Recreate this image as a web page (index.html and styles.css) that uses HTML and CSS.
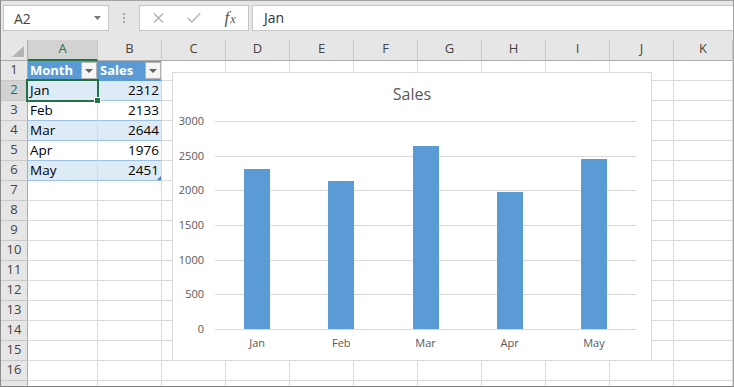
FILE: index.html
```html
<!DOCTYPE html>
<html lang="en">
<head>
    <meta charset="UTF-8">
    <meta name="viewport" content="width=device-width, initial-scale=1.0">
    <title>Sales - Excel</title>
    <link rel="stylesheet" href="styles.css">
</head>
<body>
<div class="window">
    <!-- Formula bar -->
    <div class="formula-bar">
        <div class="name-box">
            <span>A2</span>
            <svg class="caret" width="7" height="4" viewBox="0 0 7 4"><path d="M0 0h7L3.5 4z"/></svg>
        </div>
        <div class="grip"><i></i><i></i><i></i></div>
        <div class="fx-buttons">
            <span class="fx-btn">
                <svg width="11" height="10" viewBox="0 0 11 10"><path d="M1 0.5l9 9M10 0.5l-9 9"/></svg>
            </span>
            <span class="fx-btn">
                <svg width="14" height="10" viewBox="0 0 14 10"><path d="M0.8 5l4 4L13.2 0.6"/></svg>
            </span>
            <span class="fx-btn"><span class="fx">f<sub>x</sub></span></span>
        </div>
        <div class="formula-input">Jan</div>
    </div>

    <!-- Sheet -->
    <div class="sheet">
        <div class="row head">
            <div class="corner"><svg width="12" height="11" viewBox="0 0 12 11"><path d="M12 0v11H0z"/></svg></div>
            <div class="sel">A</div><div>B</div><div>C</div><div>D</div><div>E</div><div>F</div><div>G</div><div>H</div><div>I</div><div>J</div><div>K</div>
        </div>
        <div class="row">
            <div class="rh">1</div>
            <div class="th th-first"><span>Month</span><b class="filter"></b></div>
            <div class="th"><span>Sales</span><b class="filter"></b></div>
            <div></div><div></div><div></div><div></div><div></div><div></div><div></div><div></div><div></div>
        </div>
        <div class="row">
            <div class="rh sel">2</div>
            <div class="band cur">Jan</div><div class="band num">2312</div>
            <div></div><div></div><div></div><div></div><div></div><div></div><div></div><div></div><div></div>
        </div>
        <div class="row">
            <div class="rh">3</div>
            <div class="plain">Feb</div><div class="plain num">2133</div>
            <div></div><div></div><div></div><div></div><div></div><div></div><div></div><div></div><div></div>
        </div>
        <div class="row">
            <div class="rh">4</div>
            <div class="band">Mar</div><div class="band num">2644</div>
            <div></div><div></div><div></div><div></div><div></div><div></div><div></div><div></div><div></div>
        </div>
        <div class="row">
            <div class="rh">5</div>
            <div class="plain">Apr</div><div class="plain num">1976</div>
            <div></div><div></div><div></div><div></div><div></div><div></div><div></div><div></div><div></div>
        </div>
        <div class="row">
            <div class="rh">6</div>
            <div class="band">May</div><div class="band num table-end">2451</div>
            <div></div><div></div><div></div><div></div><div></div><div></div><div></div><div></div><div></div>
        </div>
        <div class="row"><div class="rh">7</div><div></div><div></div><div></div><div></div><div></div><div></div><div></div><div></div><div></div><div></div><div></div></div>
        <div class="row"><div class="rh">8</div><div></div><div></div><div></div><div></div><div></div><div></div><div></div><div></div><div></div><div></div><div></div></div>
        <div class="row"><div class="rh">9</div><div></div><div></div><div></div><div></div><div></div><div></div><div></div><div></div><div></div><div></div><div></div></div>
        <div class="row"><div class="rh">10</div><div></div><div></div><div></div><div></div><div></div><div></div><div></div><div></div><div></div><div></div><div></div></div>
        <div class="row"><div class="rh">11</div><div></div><div></div><div></div><div></div><div></div><div></div><div></div><div></div><div></div><div></div><div></div></div>
        <div class="row"><div class="rh">12</div><div></div><div></div><div></div><div></div><div></div><div></div><div></div><div></div><div></div><div></div><div></div></div>
        <div class="row"><div class="rh">13</div><div></div><div></div><div></div><div></div><div></div><div></div><div></div><div></div><div></div><div></div><div></div></div>
        <div class="row"><div class="rh">14</div><div></div><div></div><div></div><div></div><div></div><div></div><div></div><div></div><div></div><div></div><div></div></div>
        <div class="row"><div class="rh">15</div><div></div><div></div><div></div><div></div><div></div><div></div><div></div><div></div><div></div><div></div><div></div></div>
        <div class="row"><div class="rh">16</div><div></div><div></div><div></div><div></div><div></div><div></div><div></div><div></div><div></div><div></div><div></div></div>
        <div class="row"><div class="rh"></div><div></div><div></div><div></div><div></div><div></div><div></div><div></div><div></div><div></div><div></div><div></div></div>

        <!-- Chart floating over the grid -->
        <div class="chart">
            <div class="chart-title">Sales</div>
            <div class="chart-body">
                <div class="y-axis">
                    <span>3000</span><span>2500</span><span>2000</span><span>1500</span><span>1000</span><span>500</span><span>0</span>
                </div>
                <div class="plot-area">
                    <div class="plot">
                        <div class="gridlines"><i></i><i></i><i></i><i></i><i></i><i></i></div>
                        <div class="bars">
                            <div class="cat"><div class="bar" style="height: 77.07%"></div></div>
                            <div class="cat"><div class="bar" style="height: 71.1%"></div></div>
                            <div class="cat"><div class="bar" style="height: 88.13%"></div></div>
                            <div class="cat"><div class="bar" style="height: 65.87%"></div></div>
                            <div class="cat"><div class="bar" style="height: 81.7%"></div></div>
                        </div>
                    </div>
                    <div class="x-axis">
                        <span>Jan</span><span>Feb</span><span>Mar</span><span>Apr</span><span>May</span>
                    </div>
                </div>
            </div>
        </div>
    </div>
</div>
</body>
</html>
```

FILE: styles.css
```css
body {
    margin: 0;
    font-family: "Open Sans", sans-serif;
    background-color: #fff;
}
.window {
    width: 734px;
    height: 387px;
    box-sizing: border-box;
    border: 1px solid #a3a3a3;
    border-left-color: #8c8c8c;
    border-bottom-color: #808080;
    background-color: #e6e6e6;
    overflow: hidden;
    display: flex;
    flex-direction: column;
}

/* formula bar */
.formula-bar {
    height: 39px;
    flex-shrink: 0;
    display: flex;
    align-items: flex-start;
    padding: 4px 0 0 2px;
    box-sizing: border-box;
}
.name-box,
.fx-buttons,
.formula-input {
    height: 26px;
    box-sizing: border-box;
    border: 1px solid #c6c6c6;
    background-color: #fff;
}
.name-box {
    width: 106px;
    display: flex;
    align-items: center;
    justify-content: space-between;
    padding: 0 7px 0 10px;
    font-size: 14px;
    color: #444;
}
.caret {
    fill: #777;
}
.grip {
    width: 30px;
    height: 26px;
    display: flex;
    flex-direction: column;
    align-items: center;
    justify-content: center;
    gap: 2px;
}
.grip i {
    width: 2px;
    height: 2px;
    background-color: #a6a6a6;
}
.fx-buttons {
    width: 110px;
    display: flex;
}
.fx-btn {
    width: 36px;
    display: flex;
    align-items: center;
    justify-content: center;
}
.fx-btn svg {
    fill: none;
    stroke: #b3b3b3;
    stroke-width: 1.4;
}
.fx {
    font-family: "Liberation Serif", serif;
    font-style: italic;
    font-size: 17px;
    line-height: 20px;
    color: #555;
}
.fx sub {
    font-size: 12px;
    vertical-align: 0;
    margin-left: 1px;
}
.formula-input {
    flex: 1;
    margin-left: 3px;
    border-right: none;
    padding-left: 11px;
    font-size: 14px;
    line-height: 24px;
    color: #333;
}

/* sheet grid */
.sheet {
    position: relative;
    flex: 1;
    overflow: hidden;
    background-color: #fff;
}
.row {
    display: grid;
    grid-template-columns: 27px 70px repeat(9, 64px) 1fr;
    height: 20px;
}
.row > div {
    box-sizing: border-box;
    border-right: 1px solid #dadada;
    border-bottom: 1px solid #dadada;
    font-size: 13.5px;
    line-height: 19px;
    color: #000;
    white-space: nowrap;
}
.row > .rh {
    background-color: #e6e6e6;
    border-right-color: #ababab;
    border-bottom-color: #c8c8c8;
    text-align: center;
    font-size: 13px;
    line-height: 17px;
    color: #444;
}
.row > .rh.sel {
    background-color: #d2d2d2;
    color: #217346;
}
.row.head {
    height: 21px;
}
.row.head > div {
    background-color: #e6e6e6;
    border-right-color: #c8c8c8;
    border-bottom-color: #ababab;
    text-align: center;
    font-size: 13px;
    line-height: 17px;
    color: #444;
}
.row.head > .corner {
    border-right-color: #ababab;
    display: flex;
    align-items: flex-end;
    justify-content: flex-end;
    padding: 0 3px 3px 0;
}
.corner svg {
    fill: #b4b4b4;
}
.row.head > .sel {
    background-color: #d2d2d2;
    border-bottom: 2px solid #217346;
    color: #217346;
}

/* table */
.row > .th {
    background-color: #5b9bd5;
    border-bottom-color: #5b9bd5;
    color: #fff;
    font-size: 13px;
    font-weight: bold;
    display: flex;
    justify-content: space-between;
    align-items: flex-start;
    padding-left: 2px;
}
.row > .th-first {
    border-right-color: #5b9bd5;
}
.filter {
    width: 16px;
    height: 17px;
    box-sizing: border-box;
    margin-top: 1px;
    border: 1px solid #b4b4b4;
    background-color: #f5f5f5;
    display: flex;
    align-items: center;
    justify-content: center;
}
.filter::after {
    content: "";
    border-left: 4px solid transparent;
    border-right: 4px solid transparent;
    border-top: 4px solid #5f5f5f;
}
.row > .band {
    background-color: #ddebf7;
    border-bottom-color: #9bc2e6;
    padding-left: 2px;
}
.row > .plain {
    border-bottom-color: #9bc2e6;
    padding-left: 2px;
}
.row > .num {
    text-align: right;
    padding: 0 2px 0 0;
}
.table-end {
    position: relative;
}
.table-end::after {
    content: "";
    position: absolute;
    right: 0;
    bottom: 0;
    border-left: 4px solid transparent;
    border-bottom: 4px solid #3c7cc9;
}
.cur {
    position: relative;
}
.cur::after {
    content: "";
    position: absolute;
    left: -2px;
    top: -2px;
    right: -2px;
    bottom: -2px;
    border: 2px solid #217346;
    z-index: 2;
}
.cur::before {
    content: "";
    position: absolute;
    right: -4px;
    bottom: -4px;
    width: 5px;
    height: 5px;
    background-color: #217346;
    border: 1px solid #fff;
    z-index: 3;
}

/* chart */
.chart {
    position: absolute;
    left: 171px;
    top: 32px;
    width: 480px;
    height: 289px;
    box-sizing: border-box;
    border: 1px solid #d9d9d9;
    background-color: #fff;
    color: #595959;
}
.chart-title {
    padding-top: 11px;
    font-size: 16px;
    line-height: 20px;
    text-align: center;
}
.chart-body {
    display: flex;
    align-items: flex-start;
    margin-top: 17px;
}
.y-axis {
    width: 31px;
    margin: -7px 11px 0 0;
    text-align: right;
}
.y-axis span {
    display: block;
    height: 34.667px;
    font-size: 11px;
    line-height: 14px;
}
.plot-area {
    width: 421px;
}
.plot {
    display: grid;
    height: 209px;
}
.plot > div {
    grid-area: 1 / 1;
}
.gridlines {
    display: flex;
    flex-direction: column;
    border-bottom: 1px solid #d9d9d9;
}
.gridlines i {
    flex: 1;
    border-top: 1px solid #d9d9d9;
}
.bars {
    display: flex;
    padding-bottom: 1px;
}
.cat {
    flex: 1;
    display: flex;
    justify-content: center;
    align-items: flex-end;
}
.bar {
    width: 26px;
    background-color: #5b9bd5;
}
.x-axis {
    display: flex;
    margin-top: 6px;
}
.x-axis span {
    flex: 1;
    text-align: center;
    font-size: 11px;
    line-height: 14px;
}
```
